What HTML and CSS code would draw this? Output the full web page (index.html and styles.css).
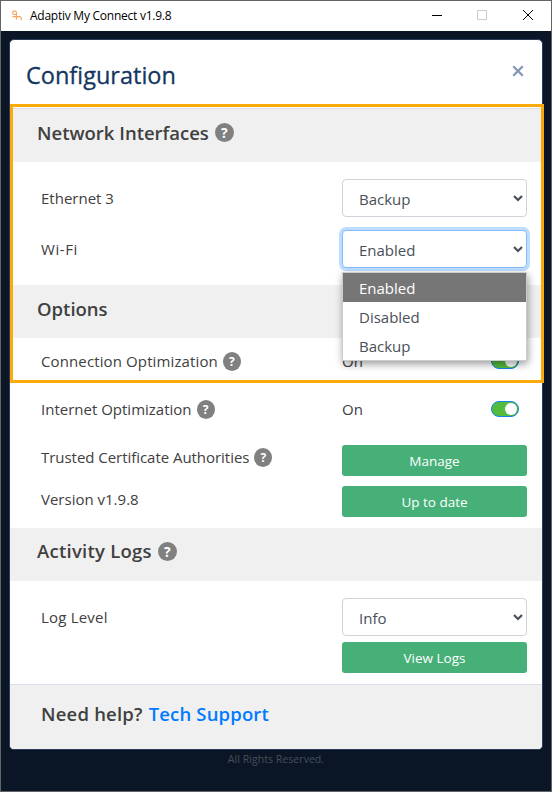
FILE: index.html
```html
<!DOCTYPE html>
<html lang="en">
<head>
<meta charset="utf-8">
<title>Adaptiv My Connect v1.9.8</title>
<link rel="stylesheet" href="styles.css">
</head>
<body>
<div class="window">
  <header class="titlebar">
    <svg class="logo" width="12" height="12" viewBox="0 0 12 12"><path d="M6 4.5H2.8A1.9 1.9 0 1 1 5.4 2.6V9.5M1.5 6.6h6.8a1.9 1.9 0 0 1 1.9 1.9V10.2"/></svg>
    <span class="app-name">Adaptiv My Connect v1.9.8</span>
    <svg class="controls" width="108" height="12" viewBox="0 0 108 12"><path class="dark" d="M1 6.5h10M92 1l10 10M102 1L92 11"/><path class="disabled" d="M46.5 1.5h9v9h-9z"/></svg>
  </header>
  <main class="backdrop">
    <section class="modal">
      <div class="modal-header">
        <h1>Configuration</h1>
        <svg class="close" width="12" height="12" viewBox="0 0 12 12"><path d="M1.2 1.2l9.6 9.6M10.8 1.2L1.2 10.8"/></svg>
      </div>
      <h2 class="section"><span class="t-network">Network Interfaces</span><span class="help big">?</span></h2>
      <div class="group interfaces">
        <div class="row"><span class="label">Ethernet 3</span>
          <div class="select"><span>Backup</span><svg class="chevron" width="10" height="7" viewBox="0 0 10 7"><path d="M1 1l4 4 4-4"/></svg></div></div>
        <div class="row"><span class="label t-wifi">Wi-Fi</span>
          <div class="select focus"><span>Enabled</span><svg class="chevron" width="10" height="7" viewBox="0 0 10 7"><path d="M1 1l4 4 4-4"/></svg>
            <div class="menu"><div class="item active">Enabled</div><div class="item">Disabled</div><div class="item">Backup</div></div>
          </div></div>
      </div>
      <h2 class="section"><span>Options</span></h2>
      <div class="group options">
        <div class="row"><span class="label t-connection">Connection Optimization</span><span class="help">?</span><div class="status"><span>On</span><i class="toggle"></i></div></div>
        <div class="row"><span class="label">Internet Optimization</span><span class="help">?</span><div class="status"><span>On</span><i class="toggle"></i></div></div>
        <div class="row trusted"><span class="label t-trusted">Trusted Certificate Authorities</span><span class="help">?</span><div class="button">Manage</div></div>
        <div class="row version"><span class="label">Version v1.9.8</span><div class="button">Up to date</div></div>
      </div>
      <h2 class="section activity"><span class="t-activity">Activity Logs</span><span class="help big">?</span></h2>
      <div class="group logs">
        <div class="row"><span class="label t-log">Log Level</span><div class="select"><span>Info</span><svg class="chevron" width="10" height="7" viewBox="0 0 10 7"><path d="M1 1l4 4 4-4"/></svg></div></div>
        <div class="button">View Logs</div>
      </div>
      <footer class="modal-footer"><span class="t-need">Need help?</span><a class="t-tech">Tech Support</a></footer>
      <div class="highlight"></div>
    </section>
    <p class="copyright">All Rights Reserved.</p>
  </main>
</div>
</body>
</html>
```
FILE: styles.css
```css
* { box-sizing: border-box; }
body { margin: 0; font-family: "Open Sans", "Noto Sans", sans-serif; font-size: 15px; color: #404040; }
.window { width: 552px; height: 792px; border: 1px solid #646464; display: flex; flex-direction: column; background: #0a1626; overflow: hidden; }
span, a { white-space: nowrap; }
.titlebar { height: 30px; flex: none; background: #fff; display: flex; align-items: center; padding: 0 12px 0 10px; color: #000; }
.logo { fill: none; stroke: #f7a45c; stroke-width: 1.2; }
.app-name { margin: -2px 0 0 7px; font-size: 12px; letter-spacing: -.25px; }
.controls { margin: -2px 0 0 auto; fill: none; stroke-width: 1; }
.dark { stroke: #000; }
.disabled { stroke: #ccc; }
.backdrop { flex: 1; padding: 8px 8px 0; }
.modal { position: relative; width: 534px; height: 711px; background: #fff; border: 1px solid #2b3c59; border-radius: 5px; }
.modal-header { height: 69px; border-bottom: 1px solid #dee2e6; display: flex; align-items: center; justify-content: space-between; padding: 1px 18px 0 16px; }
h1 { margin: 0; font-size: 23.5px; line-height: 32px; font-weight: 500; color: #14365f; -webkit-text-stroke: .3px #14365f; }
.close { margin-top: -8px; stroke: #8498b5; stroke-width: 2.3; fill: none; }
.section { margin: 0; height: 53px; background: #f0f0f0; display: flex; align-items: center; padding: 0 27px 7px; font-size: 18.5px; font-weight: 600; }
.section.activity { padding-bottom: 8px; }
.t-activity { letter-spacing: .25px; }
.help { width: 18px; height: 19px; flex: none; border-radius: 50%; background: #808080; color: #fff; font: 700 12px/19px "Open Sans", sans-serif; text-align: center; margin-left: 5px; }
.help.big { width: 19px; margin: 1px 0 0 6px; font-size: 14px; }
.group { padding: 0 15px 0 31px; }
.row { display: flex; align-items: center; height: 48px; }
.interfaces { height: 123px; padding-top: 17px; }
.interfaces .row { height: 38px; margin-bottom: 13px; }
.t-wifi { letter-spacing: .6px; }
.t-connection { letter-spacing: .12px; }
.t-trusted { letter-spacing: -.04px; }
.t-log { letter-spacing: .2px; }
.options { height: 190px; }
.options .row { padding-bottom: 2px; }
.select, .button, .status { width: 185px; margin-left: auto; flex: none; }
.select { position: relative; height: 38px; border: 1px solid #ced4da; border-radius: 4px; padding: 2px 3px 0 16px; display: flex; align-items: center; justify-content: space-between; color: #495057; background: #fff; }
.focus { border-color: #80bdff; box-shadow: 0 0 0 3px #bfdeff; }
.chevron { margin-top: -2px; fill: none; stroke: #495057; stroke-width: 2.2; }
.menu { position: absolute; z-index: 2; left: -1px; top: 41px; width: 185px; height: 89px; border: 1px solid #ccc; background: #fff; box-shadow: 1px 3px 8px rgba(0,0,0,.4); }
.item { height: 29px; padding: 1px 0 0 16px; line-height: 28px; }
.active { background: #767676; color: #fff; }
.status { display: flex; align-items: center; justify-content: space-between; padding-right: 8px; }
.toggle { width: 28px; height: 16px; border: 1px solid #1683e8; border-radius: 8px; background: #55bb3e; display: flex; justify-content: flex-end; padding: 1px 1px 0; }
.toggle::after { content: ""; width: 12px; height: 12px; border-radius: 50%; background: #fff; }
.button { height: 31px; border-radius: 3px; background: #46b078; color: #fff; display: flex; align-items: center; justify-content: center; font-size: 13.5px; padding-top: 1px; }
.trusted .button { margin-top: 7px; }
.options .version { height: 46px; padding-bottom: 13px; }
.version .button { margin-top: 6px; }
.logs { height: 103px; padding-top: 17px; }
.logs .row { height: 38px; margin-bottom: 6px; }
.modal-footer { height: 65px; border-top: 1px solid #d8dfe8; border-radius: 0 0 4px 4px; background: #f0f0f0; padding: 0 31px 8px; display: flex; align-items: center; font-size: 18.5px; font-weight: 600; }
.t-need { letter-spacing: .2px; }
.modal-footer a { color: #007bff; margin-left: 6px; letter-spacing: .16px; }
.highlight { position: absolute; z-index: 1; left: 0; top: 64px; width: 534px; height: 279px; border: 3px solid #fca90a; pointer-events: none; }
.copyright { margin: 2px 0 0; text-align: center; font-size: 10.5px; line-height: 15px; color: #484e57; letter-spacing: .05px; }
```
